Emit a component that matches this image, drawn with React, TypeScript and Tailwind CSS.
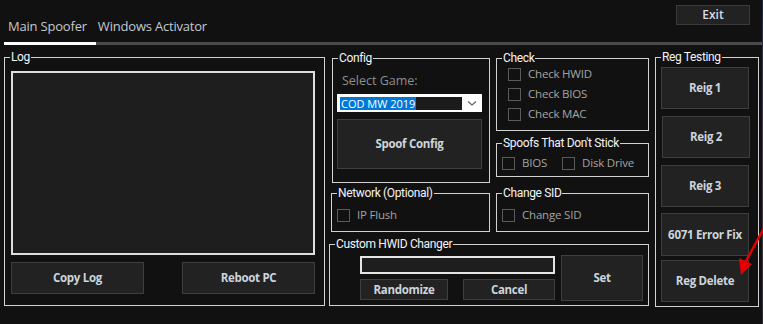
import React from 'react';

const Group: React.FC<{ title: string; className?: string; children?: React.ReactNode }> = ({
  title,
  className = '',
  children,
}) => (
  <div className={`relative border border-[#d2d2d2] ${className}`}>
    <span className="absolute -top-[9px] left-[5px] bg-[#111111] px-[1px] font-['Roboto',sans-serif] text-[12px] leading-[16px] tracking-[-0.35px] text-[#f2f4f7]">
      {title}
    </span>
    {children}
  </div>
);

const Btn: React.FC<{ label: string; className?: string }> = ({ label, className = '' }) => (
  <button
    className={`flex items-center justify-center bg-[#222222] border border-[#3e3e3e] text-[11.5px] font-bold tracking-[-0.3px] text-[#cdd5dc] ${className}`}
  >
    {label}
  </button>
);

const Check: React.FC<{ label: string; className?: string }> = ({ label, className = '' }) => (
  <label className={`flex h-[20px] items-center ${className}`}>
    <span className="h-[13px] w-[13px] border border-[#5a5a5a]" />
    <span className="ml-[7px] text-[11.5px] tracking-[-0.2px] text-[#a4a4a4]">{label}</span>
  </label>
);

export default function App() {
  return (
    <div className="relative flex h-[324px] w-[763px] overflow-hidden bg-[#111111] font-['Open_Sans',sans-serif]">
      <div className="flex flex-1 flex-col">
        {/* header / tabs */}
        <div className="flex h-[42px] items-start justify-between">
          <div className="flex pl-[8px] pt-[17px] text-[13px] leading-[18px] tracking-[-0.2px] text-[#c4c9ce]">
            <span>Main Spoofer</span>
            <span className="ml-[11px]">Windows Activator</span>
          </div>
          <button className="mr-[12px] mt-[5px] flex h-[20px] w-[74px] items-center justify-center border border-[#3a3a3a] bg-[#222222] text-[12px] font-semibold text-[#d8dde3]">
            Exit
          </button>
        </div>
        <div className="ml-[4px] flex h-[3px]">
          <div className="w-[92px] bg-white" />
          <div className="flex-1 bg-[#4a4a4a]" />
        </div>

        {/* body */}
        <div className="mt-[12px] flex pl-[4px]">
          <Group title="Log" className="h-[249px] w-[321px]">
            <div className="pl-[6px] pr-[9px] pt-[13px]">
              <div className="h-[184px] w-full border-2 border-[#dedede] bg-[#1e1e1e]" />
              <div className="mt-[7px] flex justify-between">
                <Btn label="Copy Log" className="h-[32px] w-[133px]" />
                <Btn label="Reboot PC" className="h-[32px] w-[133px]" />
              </div>
            </div>
          </Group>

          <div className="ml-[4px] flex w-[320px] flex-col">
            <div className="flex">
              <div className="ml-[2px] flex w-[159px] flex-col">
                <Group title="Config" className="ml-[1px] mt-[1px] h-[125px] w-[158px]">
                  <div className="px-[4px] pt-[12px]">
                    <div className="h-[20px] pl-[5px] text-[12.5px] leading-[20px] text-[#8e8e8e]">
                      Select Game:
                    </div>
                    <div className="mt-[3px] flex h-[18px] w-[145px] items-center bg-white">
                      <div className="ml-[3px] flex h-[13px] w-[122px] items-center bg-[#1b1b1b]">
                        <span className="bg-[#0078d7] px-[1px] text-[11px] leading-[13px] text-white">
                          COD MW 2019
                        </span>
                      </div>
                      <svg width="20" height="18" viewBox="0 0 20 18" className="ml-auto">
                        <path d="M6 7.5 L10 11 L14 7.5" fill="none" stroke="#606060" strokeWidth="1.1" />
                      </svg>
                    </div>
                    <Btn label="Spoof Config" className="mt-[7px] h-[50px] w-[145px]" />
                  </div>
                </Group>
                <Group title="Network (Optional)" className="mt-[10px] h-[39px] w-[159px]">
                  <Check label="IP Flush" className="mt-[11px] pl-[5px]" />
                </Group>
              </div>

              <div className="ml-[6px] flex w-[153px] flex-col">
                <Group title="Check" className="mt-[1px] h-[73px] w-[153px]">
                  <div className="pl-[11px] pt-[5px]">
                    <Check label="Check HWID" />
                    <Check label="Check BIOS" />
                    <Check label="Check MAC" />
                  </div>
                </Group>
                <Group title="Spoofs That Don't Stick" className="mt-[12px] h-[34px] w-[153px]">
                  <div className="flex pl-[5px] pt-[9px]">
                    <Check label="BIOS" />
                    <Check label="Disk Drive" className="ml-[15px]" />
                  </div>
                </Group>
                <Group title="Change SID" className="mt-[16px] h-[39px] w-[153px]">
                  <Check label="Change SID" className="mt-[11px] pl-[5px]" />
                </Group>
              </div>
            </div>

            <Group title="Custom HWID Changer" className="mt-[12px] h-[62px] w-[320px]">
              <div className="flex pl-[30px] pt-[10px]">
                <div className="flex w-[195px] flex-col">
                  <div className="mt-[1px] h-[18px] w-[195px] border-2 border-[#e4e4e4] bg-[#1e1e1e]" />
                  <div className="mt-[5px] flex justify-between">
                    <Btn label="Randomize" className="h-[21px] w-[88px]" />
                    <Btn label="Cancel" className="h-[21px] w-[92px]" />
                  </div>
                </div>
                <Btn label="Set" className="ml-[6px] h-[46px] w-[82px]" />
              </div>
            </Group>
          </div>

          <Group title="Reg Testing" className="ml-[6px] h-[250px] w-[104px]">
            <div className="flex flex-col pl-[5px] pt-[9px]">
              <Btn label="Reig 1" className="h-[42px] w-[88px]" />
              <Btn label="Reig 2" className="ml-[1px] mt-[7px] h-[42px] w-[88px]" />
              <Btn label="Reig 3" className="mt-[7px] h-[42px] w-[88px]" />
              <Btn label="6071 Error Fix" className="mt-[6px] h-[43px] w-[88px]" />
              <Btn label="Reg Delete" className="mt-[4px] h-[42px] w-[88px]" />
            </div>
          </Group>
        </div>
      </div>
      <div className="w-[1px] bg-gradient-to-b from-[#1c2846] via-[#4a3a52] to-[#2a2a30]" />

      {/* red annotation arrow */}
      <svg className="pointer-events-none absolute left-[735px] top-[222px]" width="30" height="58" viewBox="0 0 30 58">
        <line x1="30" y1="4" x2="10.5" y2="40" stroke="#e60000" strokeWidth="2.4" />
        <polygon points="6,53 4,36 17,42" fill="#e60000" />
      </svg>
    </div>
  );
}
